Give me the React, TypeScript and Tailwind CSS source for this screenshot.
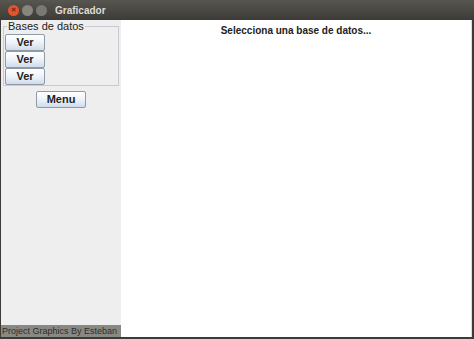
import React from "react";

const font = { fontFamily: '"Liberation Sans", Arial, sans-serif' };

function SwingButton({ label, className = "" }: { label: string; className?: string }) {
  return (
    <button
      className={
        "flex items-center justify-center rounded-[2px] border border-[#8e9aa6] bg-gradient-to-b from-[#ffffff] via-[#eef3f9] to-[#cfdcea] text-[11px] font-bold text-[#222] leading-none " +
        className
      }
    >
      {label}
    </button>
  );
}

export default function App() {
  return (
    <div className="flex h-[339px] w-[474px] flex-col bg-[#3c3b37]" style={font}>
      {/* title bar */}
      <div className="flex h-[20px] items-center gap-[3px] bg-gradient-to-b from-[#57564f] to-[#3c3b37] pl-[8px]">
        <span className="flex h-[11px] w-[11px] items-center justify-center rounded-full bg-[#e0552f] text-[8px] font-bold leading-none text-[#5a2410]">
          ×
        </span>
        <span className="h-[11px] w-[11px] rounded-full bg-[#87867f]" />
        <span className="h-[11px] w-[11px] rounded-full bg-[#7a7973]" />
        <span className="ml-[5px] text-[10px] font-bold text-[#dfdbd2]">Graficador</span>
      </div>

      <div className="flex flex-1 pl-[1px] pr-[2px] pb-[2px]">
        {/* left panel */}
        <div className="flex w-[120px] flex-col bg-[#eeeeee]">
          <fieldset className="mx-[2px] h-[66px] border border-[#c8ccd2] px-[1px] pb-[1px]">
            <legend className="ml-[2px] px-[1px] text-[11px] leading-[12px] text-[#222]">Bases de datos</legend>
            <div className="mt-[2px] flex flex-col">
              <SwingButton label="Ver" className="h-[17px] w-[40px]" />
              <SwingButton label="Ver" className="h-[17px] w-[40px]" />
              <SwingButton label="Ver" className="h-[17px] w-[40px]" />
            </div>
          </fieldset>
          <div className="mt-[5px] flex justify-center">
            <SwingButton label="Menu" className="h-[17px] w-[50px]" />
          </div>
          <div className="flex-1" />
          <div className="h-[12px] whitespace-nowrap bg-[#8a8882] pl-[1px] text-[9px] leading-[12px] text-[#2e2e2e]">
            Project Graphics By Esteban
          </div>
        </div>

        {/* right panel */}
        <div className="flex flex-1 justify-center border-r border-[#dcdcdc] bg-white pt-[3px]">
          <span className="text-[10px] font-bold text-[#222]">Selecciona una base de datos...</span>
        </div>
      </div>
    </div>
  );
}
